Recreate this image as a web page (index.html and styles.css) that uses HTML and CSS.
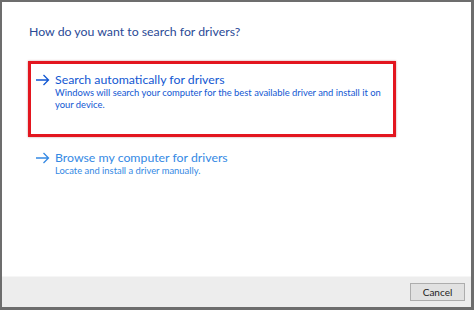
FILE: index.html
```html
<!DOCTYPE html>
<html lang="en">
<head>
    <meta charset="UTF-8">
    <title>Update Drivers</title>
    <link rel="stylesheet" href="styles.css">
</head>
<body>
    <div class="window">
        <div class="content">
            <h1 class="instruction">How do you want to search for drivers?</h1>
            <div class="option highlighted">
                <span class="arrow">
                    <svg width="15" height="12" viewBox="0 0 15 12"><path d="M1 6h12.5M8.5 1l5 5-5 5" fill="none" stroke="currentColor" stroke-width="1.3"/></svg>
                </span>
                <div class="option-text">
                    <div class="option-title">Search automatically for drivers</div>
                    <div class="option-desc">Windows will search your computer for the best available driver and install it on your device.</div>
                </div>
            </div>
            <div class="option light">
                <span class="arrow">
                    <svg width="15" height="12" viewBox="0 0 15 12"><path d="M1 6h12.5M8.5 1l5 5-5 5" fill="none" stroke="currentColor" stroke-width="1.3"/></svg>
                </span>
                <div class="option-text">
                    <div class="option-title">Browse my computer for drivers</div>
                    <div class="option-desc">Locate and install a driver manually.</div>
                </div>
            </div>
        </div>
        <div class="footer">
            <button class="btn">Cancel</button>
        </div>
    </div>
</body>
</html>
```

FILE: styles.css
```css
html, body {
    margin: 0;
    padding: 0;
}
body {
    font-family: Lato, "Open Sans", sans-serif;
    background-color: #6d6d6d;
}
.window {
    display: flex;
    flex-direction: column;
    box-sizing: border-box;
    width: 474px;
    height: 310px;
    border-style: solid;
    border-color: #6d6d6d;
    border-width: 2px 3px 3px 2px;
    background-color: #ffffff;
}
.content {
    flex: 1;
    padding: 0 0 0 26px;
}
.instruction {
    margin: 22px 0 0 1px;
    font-size: 12.3px;
    line-height: 16px;
    font-weight: normal;
    color: #2a4a96;
}
.option {
    display: flex;
    width: 358px;
    padding: 9px 0 0 4px;
    color: #1257d2;
}
.highlighted {
    margin-top: 21px;
    height: 61px;
    border: 3px solid #e3161f;
    box-shadow: 0 0 2px rgba(120, 0, 0, 0.4);
}
.light {
    margin-top: 2px;
    color: #3489e4;
    border: 3px solid transparent;
}
.arrow {
    display: flex;
    align-items: flex-start;
    padding: 1px 5px 0 0;
}
.option-title {
    font-size: 12.3px;
    line-height: 14px;
}
.option-desc {
    max-width: 330px;
    font-size: 9.4px;
    line-height: 12px;
}
.footer {
    display: flex;
    justify-content: flex-end;
    align-items: center;
    height: 30px;
    padding-right: 6px;
    border-top: 1px solid #f6f6f6;
    background-color: #ededed;
}
.btn {
    width: 55px;
    height: 18px;
    padding: 0;
    font-family: Lato, "Open Sans", sans-serif;
    font-size: 10px;
    color: #222222;
    border: 1px solid #adadad;
    background-color: #e1e1e1;
}
```
